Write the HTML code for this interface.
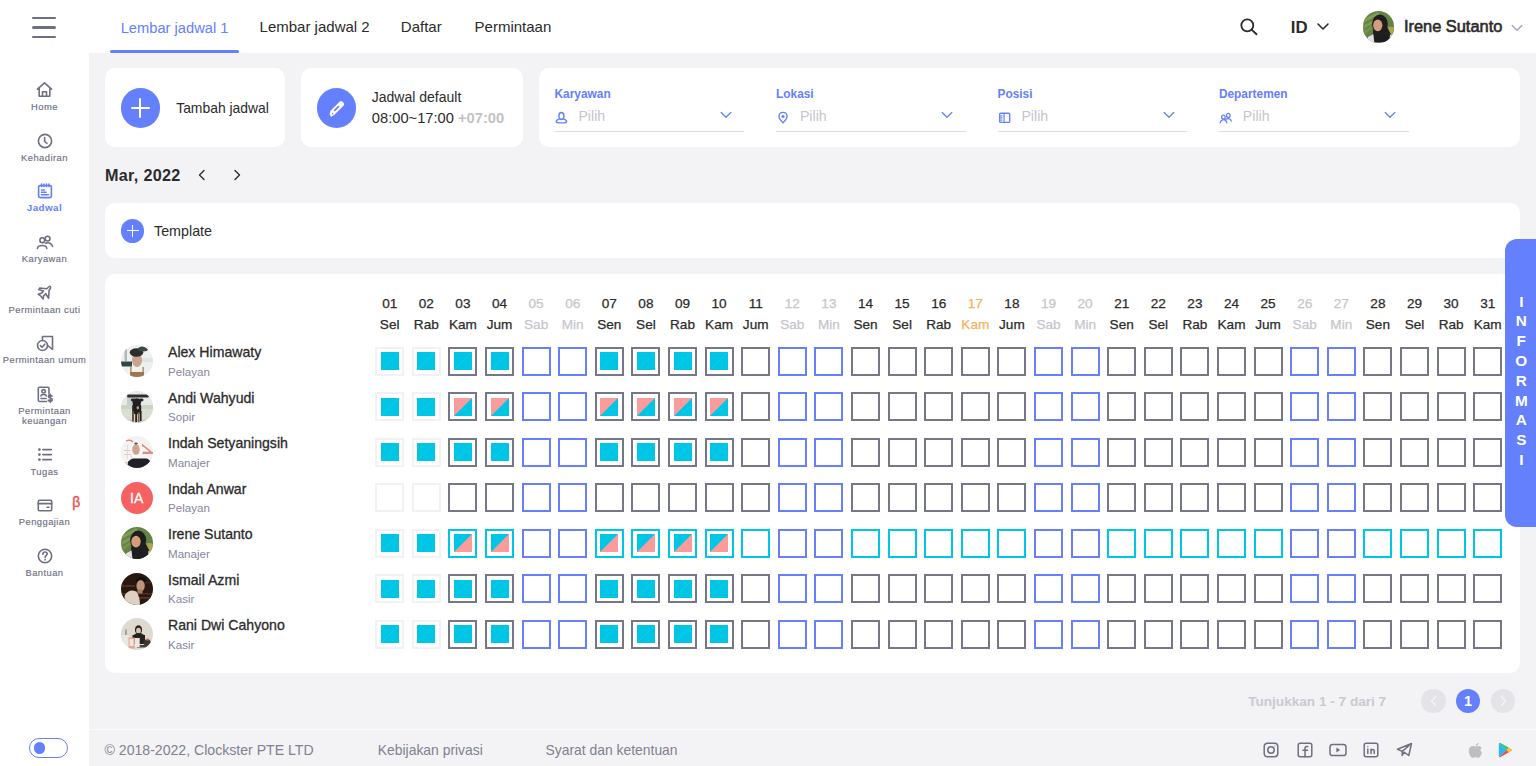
<!DOCTYPE html>
<html><head><meta charset="utf-8"><title>Jadwal</title>
<style>
html,body{margin:0;padding:0;}
body{width:1536px;height:766px;overflow:hidden;position:relative;background:#f3f3f6;font-family:"Liberation Sans",sans-serif;}
.t{position:absolute;white-space:nowrap;line-height:1;}
.circ{position:absolute;border-radius:50%;background:#6580fd;}
.av{position:absolute;border-radius:50%;overflow:hidden;font-family:"Liberation Sans",sans-serif;}
.c{position:absolute;width:29px;height:29px;box-sizing:border-box;}
.c i{position:absolute;left:3.5px;top:3.5px;right:3.5px;bottom:3.5px;display:block;}
svg{overflow:visible;}
</style></head><body>
<div style="position:absolute;left:0px;top:0px;width:89px;height:766px;background:#ffffff"></div>
<div style="position:absolute;left:89px;top:0px;width:1447px;height:52.5px;background:#ffffff"></div>
<div style="position:absolute;left:89px;top:729px;width:1447px;height:1px;background:#fbfbfc"></div>
<div style="position:absolute;left:32px;top:16.6px;width:24px;height:2.4px;background:#6e7082;border-radius:2px"></div>
<div style="position:absolute;left:32px;top:26.2px;width:24px;height:2.4px;background:#6e7082;border-radius:2px"></div>
<div style="position:absolute;left:32px;top:35.9px;width:24px;height:2.4px;background:#6e7082;border-radius:2px"></div>
<svg style="position:absolute;left:36px;top:81px" width="17" height="17" viewBox="0 0 17 17"><path d="M1.5 8.2 L8.5 1.8 L15.5 8.2 M3.2 6.8 V15.2 H13.8 V6.8 M6.5 15.2 V10.8 H10.5 V15.2" fill="none" stroke="#6e7082" stroke-width="1.6" stroke-linecap="round" stroke-linejoin="round"/></svg>
<div class="t" style="left:0.00px;width:89px;text-align:center;top:101.90px;font-size:9.4px;color:#6e7082;font-weight:400;letter-spacing:0.45px;-webkit-text-stroke:0.15px #6e7082;">Home</div>
<svg style="position:absolute;left:36.5px;top:132.5px" width="16" height="16" viewBox="0 0 16 16"><circle cx="8" cy="8" r="6.6" fill="none" stroke="#6e7082" stroke-width="1.6" stroke-linecap="round" stroke-linejoin="round"/><path d="M7.6 4.5 V8.3 L10 10.5" fill="none" stroke="#6e7082" stroke-width="1.6" stroke-linecap="round" stroke-linejoin="round"/></svg>
<div class="t" style="left:0.00px;width:89px;text-align:center;top:152.80px;font-size:9.4px;color:#6e7082;font-weight:400;letter-spacing:0.45px;-webkit-text-stroke:0.15px #6e7082;">Kehadiran</div>
<svg style="position:absolute;left:36.5px;top:183px" width="16" height="16" viewBox="0 0 16 16"><rect x="1.6" y="2.6" width="12.8" height="12" rx="1.5" fill="none" stroke="#6580fd" stroke-width="1.6" stroke-linecap="round" stroke-linejoin="round"/><path d="M4.5 1 V3.5 M7 1 V3.5 M9.5 1 V3.5 M12 1 V3.5 M4.5 7 H7.5 M4.5 9.3 H9 M4.5 11.8 H11.5" fill="none" stroke="#6580fd" stroke-width="1.6" stroke-linecap="round" stroke-linejoin="round"/></svg>
<div class="t" style="left:0.00px;width:89px;text-align:center;top:203.40px;font-size:9.8px;color:#6580fd;font-weight:700;letter-spacing:0.45px;">Jadwal</div>
<svg style="position:absolute;left:36px;top:234.5px" width="18" height="15" viewBox="0 0 18 15"><circle cx="6.3" cy="5.2" r="2.4" fill="none" stroke="#6e7082" stroke-width="1.6" stroke-linecap="round" stroke-linejoin="round"/><circle cx="11.6" cy="3.6" r="2.4" fill="none" stroke="#6e7082" stroke-width="1.6" stroke-linecap="round" stroke-linejoin="round"/><path d="M1.5 13.5 C1.8 9.5 10.5 9.5 10.8 13.5 M9.5 8.2 C12.5 7 16 8.3 16.5 11.5" fill="none" stroke="#6e7082" stroke-width="1.6" stroke-linecap="round" stroke-linejoin="round"/></svg>
<div class="t" style="left:0.00px;width:89px;text-align:center;top:253.90px;font-size:9.4px;color:#6e7082;font-weight:400;letter-spacing:0.45px;-webkit-text-stroke:0.15px #6e7082;">Karyawan</div>
<svg style="position:absolute;left:36.5px;top:284.5px" width="16" height="16" viewBox="0 0 16 16"><path d="M13.2 1.4 C14 2 13.6 3.6 12.1 5.3 L11.6 13.2 L8.7 8.7 L6.6 10.9 L6.2 14 L3.9 11.2 L1.2 9.2 L4.8 7.9 L6.5 6 L1.8 4.4 L2.8 3 L9.8 3.8 C11.2 2.2 12.6 1 13.2 1.4 Z" fill="none" stroke="#6e7082" stroke-width="1.6" stroke-linecap="round" stroke-linejoin="round" stroke-width="1.35"/></svg>
<div class="t" style="left:0.00px;width:89px;text-align:center;top:304.70px;font-size:9.4px;color:#6e7082;font-weight:400;letter-spacing:0.45px;-webkit-text-stroke:0.15px #6e7082;">Permintaan cuti</div>
<svg style="position:absolute;left:35.5px;top:334.5px" width="18" height="17" viewBox="0 0 18 17"><path d="M6.5 5.5 V1.5 H16.5 V14.5 L11.8 10.5" fill="none" stroke="#6e7082" stroke-width="1.6" stroke-linecap="round" stroke-linejoin="round"/><circle cx="6.5" cy="10.5" r="5" fill="none" stroke="#6e7082" stroke-width="1.6" stroke-linecap="round" stroke-linejoin="round"/><path d="M4.4 10.6 L6 12.2 L8.8 9.2" fill="none" stroke="#6e7082" stroke-width="1.6" stroke-linecap="round" stroke-linejoin="round"/></svg>
<div class="t" style="left:0.00px;width:89px;text-align:center;top:355.20px;font-size:9.4px;color:#6e7082;font-weight:400;letter-spacing:0.45px;-webkit-text-stroke:0.15px #6e7082;">Permintaan umum</div>
<svg style="position:absolute;left:37px;top:385.5px" width="17" height="17" viewBox="0 0 17 17"><path d="M12 8 V2.6 C12 1.9 11.4 1.3 10.7 1.3 H2.6 C1.9 1.3 1.3 1.9 1.3 2.6 V14.2 C1.3 14.9 1.9 15.5 2.6 15.5 H9.5" fill="none" stroke="#6e7082" stroke-width="1.6" stroke-linecap="round" stroke-linejoin="round"/><circle cx="6.6" cy="5.3" r="1.7" fill="none" stroke="#6e7082" stroke-width="1.6" stroke-linecap="round" stroke-linejoin="round"/><path d="M3.9 10 C4.2 8 9 8 9.3 10 M4 12.5 H9" fill="none" stroke="#6e7082" stroke-width="1.6" stroke-linecap="round" stroke-linejoin="round"/><path d="M15 10.2 C14.6 9.4 13.9 9.1 13.2 9.1 C12.2 9.1 11.4 9.7 11.4 10.5 C11.4 12.3 15.2 11.7 15.2 13.8 C15.2 14.7 14.3 15.3 13.2 15.3 C12.3 15.3 11.6 14.9 11.2 14.2 M13.2 8.2 V16.3" fill="none" stroke="#6e7082" stroke-width="1.6" stroke-linecap="round" stroke-linejoin="round" stroke-width="1.3"/></svg>
<div class="t" style="left:0.00px;width:89px;text-align:center;top:406.00px;font-size:9.4px;color:#6e7082;font-weight:400;letter-spacing:0.45px;-webkit-text-stroke:0.15px #6e7082;">Permintaan</div>
<div class="t" style="left:0.00px;width:89px;text-align:center;top:416.10px;font-size:9.4px;color:#6e7082;font-weight:400;letter-spacing:0.45px;-webkit-text-stroke:0.15px #6e7082;">keuangan</div>
<svg style="position:absolute;left:36.5px;top:446.5px" width="16" height="16" viewBox="0 0 16 16"><circle cx="2.4" cy="2.6" r="1.35" fill="#6e7082"/><circle cx="2.4" cy="7.6" r="1.35" fill="#6e7082"/><circle cx="2.4" cy="12.6" r="1.35" fill="#6e7082"/><path d="M5.8 2.6 H14.3 M5.8 7.6 H14.3 M5.8 12.6 H14.3" fill="none" stroke="#6e7082" stroke-width="1.6" stroke-linecap="round" stroke-linejoin="round"/></svg>
<div class="t" style="left:0.00px;width:89px;text-align:center;top:466.80px;font-size:9.4px;color:#6e7082;font-weight:400;letter-spacing:0.45px;-webkit-text-stroke:0.15px #6e7082;">Tugas</div>
<svg style="position:absolute;left:36.5px;top:498.5px" width="16" height="13" viewBox="0 0 16 13"><rect x="1.3" y="1.3" width="13.4" height="10.4" rx="1.3" fill="none" stroke="#6e7082" stroke-width="1.6" stroke-linecap="round" stroke-linejoin="round"/><path d="M1.3 4.6 H14.7" fill="none" stroke="#6e7082" stroke-width="1.6" stroke-linecap="round" stroke-linejoin="round"/><path d="M10 8.3 H12" fill="none" stroke="#6e7082" stroke-width="1.6" stroke-linecap="round" stroke-linejoin="round"/></svg>
<div class="t" style="left:72.30px;top:494.50px;font-size:14px;color:#f0504f;font-weight:400;-webkit-text-stroke:0.4px #f0504f;">β</div>
<div class="t" style="left:0.00px;width:89px;text-align:center;top:517.10px;font-size:9.4px;color:#6e7082;font-weight:400;letter-spacing:0.45px;-webkit-text-stroke:0.15px #6e7082;">Penggajian</div>
<svg style="position:absolute;left:36.5px;top:547.5px" width="16" height="16" viewBox="0 0 16 16"><circle cx="8" cy="8" r="6.7" fill="none" stroke="#6e7082" stroke-width="1.6" stroke-linecap="round" stroke-linejoin="round"/><path d="M5.9 6.2 C5.9 4.9 6.9 4 8 4 C9.2 4 10.2 4.9 10.2 6 C10.2 7.4 8.1 7.6 8.1 9.4" fill="none" stroke="#6e7082" stroke-width="1.6" stroke-linecap="round" stroke-linejoin="round"/><circle cx="8.1" cy="11.7" r="0.9" fill="#6e7082"/></svg>
<div class="t" style="left:0.00px;width:89px;text-align:center;top:568.30px;font-size:9.4px;color:#6e7082;font-weight:400;letter-spacing:0.45px;-webkit-text-stroke:0.15px #6e7082;">Bantuan</div>
<div style="position:absolute;left:28.8px;top:738.1px;width:39.4px;height:19.6px;box-sizing:border-box;border:1.6px solid #6580fd;border-radius:10px"></div>
<div style="position:absolute;left:33.8px;top:742.2px;width:11.6px;height:11.6px;background:#6580fd;border-radius:50%"></div>
<div class="t" style="left:120.70px;top:20.50px;font-size:14.7px;color:#6580fd;font-weight:400;">Lembar jadwal 1</div>
<div style="position:absolute;left:109.7px;top:49.6px;width:129.2px;height:3.4px;background:#6580fd;border-radius:2px"></div>
<div class="t" style="left:259.60px;top:18.90px;font-size:15.0px;color:#2b2b2b;font-weight:400;">Lembar jadwal 2</div>
<div class="t" style="left:400.80px;top:18.90px;font-size:15.0px;color:#2b2b2b;font-weight:400;">Daftar</div>
<div class="t" style="left:474.60px;top:18.90px;font-size:15.0px;color:#2b2b2b;font-weight:400;">Permintaan</div>
<svg style="position:absolute;left:1239.3px;top:17.1px" width="20" height="20" viewBox="0 0 20 20"><circle cx="8.3" cy="8.3" r="6" fill="none" stroke="#2b2b2b" stroke-width="1.8"/><path d="M12.6 12.6 L17.5 17.3" stroke="#2b2b2b" stroke-width="1.9" stroke-linecap="round"/></svg>
<div class="t" style="left:1290.80px;top:19.60px;font-size:16.8px;color:#2b2b2b;font-weight:700;">ID</div>
<svg style="position:absolute;left:1316px;top:21px" width="14" height="11" viewBox="0 0 14 11"><path d="M2 3 L7 8 L12 3" fill="none" stroke="#2b2b2b" stroke-width="1.6" stroke-linecap="round" stroke-linejoin="round"/></svg>
<div class="av" style="left:1362.5px;top:11px;width:31.5px;height:31.5px"><svg width="31.5" height="31.5" viewBox="0 0 32 32"><rect width="32" height="32" fill="#658345"/><path d="M0 9 L15 1 L17 3 L1 12 Z" fill="#7f9c58"/><path d="M0 15 L13 8 L14 10 L1 18 Z" fill="#7c9a56"/><path d="M0 21 L11 14 L12 16 L1 24 Z" fill="#74924f"/><ellipse cx="28.5" cy="21" rx="5.5" ry="5" fill="#a9a64c"/><ellipse cx="17.2" cy="13.2" rx="8" ry="9.6" fill="#1e1e20"/><path d="M9 32 L10.5 22.5 L28 22.5 L29.5 32 Z" fill="#1e1e20"/><path d="M10.5 17 L25 17 L28 23 L10 23 Z" fill="#1e1e20"/><path d="M5 26.5 L10.5 23.5 L11.5 32 L5 32 Z" fill="#e4e0e8"/><path d="M27.5 23.8 L31 25.5 L30 32 L26.5 32 Z" fill="#e4e0e8"/><ellipse cx="15" cy="14.6" rx="4.7" ry="5.9" fill="#d39d7e"/></svg></div>
<div class="t" style="left:1403.90px;top:18.30px;font-size:16.4px;color:#2b2b2b;font-weight:400;-webkit-text-stroke:0.6px #2b2b2b;">Irene Sutanto</div>
<svg style="position:absolute;left:1510px;top:22px" width="14" height="11" viewBox="0 0 14 11"><path d="M2.2 3.5 L7 8.2 L11.8 3.5" fill="none" stroke="#9da3c2" stroke-width="1.3" stroke-linecap="round" stroke-linejoin="round"/></svg>
<div style="position:absolute;left:104.9px;top:68.1px;width:180px;height:79.1px;background:#fff;border-radius:10px"></div>
<div class="circ" style="left:120.8px;top:88px;width:39.5px;height:39.5px"></div>
<div style="position:absolute;left:130.6px;top:106.7px;width:19.5px;height:2.2px;background:#fff;border-radius:1px"></div>
<div style="position:absolute;left:139.25px;top:98px;width:2.2px;height:19.5px;background:#fff;border-radius:1px"></div>
<div class="t" style="left:176.20px;top:102.20px;font-size:13.9px;color:#2b2b2b;font-weight:400;">Tambah jadwal</div>
<div style="position:absolute;left:301.2px;top:68.2px;width:221.5px;height:78.7px;background:#fff;border-radius:10px"></div>
<div class="circ" style="left:316.5px;top:88px;width:39.7px;height:39.7px"></div>
<svg style="position:absolute;left:326px;top:98px" width="20" height="20" viewBox="0 0 20 20"><g transform="translate(10.4,10.8) rotate(-45)"><path d="M-9.2 1.2 Q-9.4 2.6 -8 2.2 L-5.6 2.75 H7.2 Q9.3 2.75 9.3 0.8 V-0.8 Q9.3 -2.75 7.2 -2.75 H-5.6 L-8.6 -1 Z" fill="#fff"/><rect x="-3.2" y="-0.85" width="7" height="1.7" rx="0.85" fill="#6580fd"/><path d="M-7.6 0.9 L-5.6 -0.3 L-5.6 1.6 Z" fill="#6580fd"/></g></svg>
<div class="t" style="left:371.80px;top:90.40px;font-size:14.0px;color:#2b2b2b;font-weight:400;">Jadwal default</div>
<div class="t" style="left:371.80px;top:110.60px;font-size:14.7px;color:#2b2b2b;font-weight:400;">08:00~17:00 <span style="color:#c2c2c6;font-weight:700">+07:00</span></div>
<div style="position:absolute;left:539px;top:68.2px;width:981px;height:78.7px;background:#fff;border-radius:10px"></div>
<div class="t" style="left:554.50px;top:88.80px;font-size:11.9px;color:#6580fd;font-weight:700;">Karyawan</div>
<svg style="position:absolute;left:555px;top:110.6px" width="13" height="14" viewBox="0 0 13 14"><ellipse cx="6.4" cy="5" rx="2.5" ry="3.5" fill="none" stroke="#6580fd" stroke-width="1.4"/><path d="M4.2 8.1 C2 8.6 1.2 9.6 1.2 10.4 C1.2 11.5 3.5 11.9 6.4 11.9 C9.3 11.9 11.6 11.5 11.6 10.4 C11.6 9.6 10.8 8.6 8.6 8.1" fill="none" stroke="#6580fd" stroke-width="1.4" stroke-linecap="round"/></svg>
<div class="t" style="left:578.40px;top:108.80px;font-size:14.2px;color:#c6c6cc;font-weight:400;">Pilih</div>
<svg style="position:absolute;left:719.5px;top:110px" width="12" height="10" viewBox="0 0 12 10"><path d="M1.2 2.5 L6 7.2 L10.8 2.5" fill="none" stroke="#6580fd" stroke-width="1.3" stroke-linecap="round" stroke-linejoin="round"/></svg>
<div style="position:absolute;left:554.6px;top:130.6px;width:189.6px;height:1.5px;background:#dcdce2"></div>
<div class="t" style="left:776.00px;top:88.80px;font-size:11.9px;color:#6580fd;font-weight:700;">Lokasi</div>
<svg style="position:absolute;left:776.5px;top:110.6px" width="13" height="14" viewBox="0 0 13 14"><g transform="translate(0.9,0.3) scale(0.93)"><path d="M5.5 12.4 C3 9.8 1.2 7.8 1.2 5.5 C1.2 3 3.1 1.2 5.5 1.2 C7.9 1.2 9.8 3 9.8 5.5 C9.8 7.8 8 9.8 5.5 12.4 Z" fill="none" stroke="#6580fd" stroke-width="1.45"/><ellipse cx="5.5" cy="5.6" rx="1.5" ry="1.1" fill="#6580fd" stroke="#6580fd" stroke-width="0.8"/></g></svg>
<div class="t" style="left:799.90px;top:108.80px;font-size:14.2px;color:#c6c6cc;font-weight:400;">Pilih</div>
<svg style="position:absolute;left:941.0px;top:110px" width="12" height="10" viewBox="0 0 12 10"><path d="M1.2 2.5 L6 7.2 L10.8 2.5" fill="none" stroke="#6580fd" stroke-width="1.3" stroke-linecap="round" stroke-linejoin="round"/></svg>
<div style="position:absolute;left:776.1px;top:130.6px;width:189.6px;height:1.5px;background:#dcdce2"></div>
<div class="t" style="left:997.50px;top:88.80px;font-size:11.9px;color:#6580fd;font-weight:700;">Posisi</div>
<svg style="position:absolute;left:998px;top:110.6px" width="13" height="14" viewBox="0 0 13 14"><rect x="1.7" y="2.3" width="10" height="9.1" rx="1" fill="none" stroke="#6580fd" stroke-width="1.4"/><path d="M6.1 2.3 V11.4 M2.4 4.9 H4.4 M2.4 6.9 H4.4 M2.4 9.1 H4.4" fill="none" stroke="#6580fd" stroke-width="1.2"/></svg>
<div class="t" style="left:1021.40px;top:108.80px;font-size:14.2px;color:#c6c6cc;font-weight:400;">Pilih</div>
<svg style="position:absolute;left:1162.5px;top:110px" width="12" height="10" viewBox="0 0 12 10"><path d="M1.2 2.5 L6 7.2 L10.8 2.5" fill="none" stroke="#6580fd" stroke-width="1.3" stroke-linecap="round" stroke-linejoin="round"/></svg>
<div style="position:absolute;left:997.6px;top:130.6px;width:189.6px;height:1.5px;background:#dcdce2"></div>
<div class="t" style="left:1218.90px;top:88.80px;font-size:11.9px;color:#6580fd;font-weight:700;">Departemen</div>
<svg style="position:absolute;left:1219.4px;top:110.6px" width="13" height="14" viewBox="0 0 13 14"><ellipse cx="4.4" cy="6.1" rx="1.75" ry="1.95" fill="none" stroke="#6580fd" stroke-width="1.25"/><ellipse cx="9.3" cy="4.4" rx="1.75" ry="1.95" fill="none" stroke="#6580fd" stroke-width="1.25"/><path d="M1.1 11.8 C1.8 9.6 3.2 8.6 4.6 8.6 C6 8.6 7.4 9.6 7.9 11.8 M6.6 8.1 C7.6 7.6 8.5 7.5 9.3 7.5 C10.8 7.5 11.9 8.6 12.3 10.2" fill="none" stroke="#6580fd" stroke-width="1.25" stroke-linecap="round"/></svg>
<div class="t" style="left:1242.80px;top:108.80px;font-size:14.2px;color:#c6c6cc;font-weight:400;">Pilih</div>
<svg style="position:absolute;left:1383.9px;top:110px" width="12" height="10" viewBox="0 0 12 10"><path d="M1.2 2.5 L6 7.2 L10.8 2.5" fill="none" stroke="#6580fd" stroke-width="1.3" stroke-linecap="round" stroke-linejoin="round"/></svg>
<div style="position:absolute;left:1219.0px;top:130.6px;width:189.6px;height:1.5px;background:#dcdce2"></div>
<div class="t" style="left:105.00px;top:167.00px;font-size:16.2px;color:#2b2b2b;font-weight:700;letter-spacing:0.3px;">Mar, 2022</div>
<svg style="position:absolute;left:196px;top:168px" width="12" height="14" viewBox="0 0 12 14"><path d="M8 2.5 L3.5 7 L8 11.5" fill="none" stroke="#2b2b2b" stroke-width="1.4" stroke-linecap="round" stroke-linejoin="round"/></svg>
<svg style="position:absolute;left:231px;top:168px" width="12" height="14" viewBox="0 0 12 14"><path d="M4 2.5 L8.5 7 L4 11.5" fill="none" stroke="#2b2b2b" stroke-width="1.4" stroke-linecap="round" stroke-linejoin="round"/></svg>
<div style="position:absolute;left:105px;top:202.8px;width:1415px;height:55.2px;background:#fff;border-radius:10px"></div>
<div class="circ" style="left:120.8px;top:219px;width:23.6px;height:23.6px"></div>
<div style="position:absolute;left:126.6px;top:229.9px;width:12px;height:1.6px;background:#fff"></div>
<div style="position:absolute;left:131.8px;top:224.8px;width:1.6px;height:12px;background:#fff"></div>
<div class="t" style="left:154.00px;top:223.90px;font-size:14.3px;color:#2b2b2b;font-weight:400;">Template</div>
<div style="position:absolute;left:105px;top:274px;width:1415px;height:399px;background:#fff;border-radius:10px"></div>
<div class="t" style="left:371.70px;width:36px;text-align:center;top:296.90px;font-size:13.6px;color:#2b2b2b;font-weight:400;-webkit-text-stroke:0.25px #2b2b2b;">01</div>
<div class="t" style="left:371.70px;width:36px;text-align:center;top:317.70px;font-size:13.6px;color:#2b2b2b;font-weight:400;-webkit-text-stroke:0.25px #2b2b2b;">Sel</div>
<div class="t" style="left:408.30px;width:36px;text-align:center;top:296.90px;font-size:13.6px;color:#2b2b2b;font-weight:400;-webkit-text-stroke:0.25px #2b2b2b;">02</div>
<div class="t" style="left:408.30px;width:36px;text-align:center;top:317.70px;font-size:13.6px;color:#2b2b2b;font-weight:400;-webkit-text-stroke:0.25px #2b2b2b;">Rab</div>
<div class="t" style="left:444.90px;width:36px;text-align:center;top:296.90px;font-size:13.6px;color:#2b2b2b;font-weight:400;-webkit-text-stroke:0.25px #2b2b2b;">03</div>
<div class="t" style="left:444.90px;width:36px;text-align:center;top:317.70px;font-size:13.6px;color:#2b2b2b;font-weight:400;-webkit-text-stroke:0.25px #2b2b2b;">Kam</div>
<div class="t" style="left:481.50px;width:36px;text-align:center;top:296.90px;font-size:13.6px;color:#2b2b2b;font-weight:400;-webkit-text-stroke:0.25px #2b2b2b;">04</div>
<div class="t" style="left:481.50px;width:36px;text-align:center;top:317.70px;font-size:13.6px;color:#2b2b2b;font-weight:400;-webkit-text-stroke:0.25px #2b2b2b;">Jum</div>
<div class="t" style="left:518.10px;width:36px;text-align:center;top:296.90px;font-size:13.6px;color:#c6c6cc;font-weight:400;-webkit-text-stroke:0.25px #c6c6cc;">05</div>
<div class="t" style="left:518.10px;width:36px;text-align:center;top:317.70px;font-size:13.6px;color:#c6c6cc;font-weight:400;-webkit-text-stroke:0.25px #c6c6cc;">Sab</div>
<div class="t" style="left:554.70px;width:36px;text-align:center;top:296.90px;font-size:13.6px;color:#c6c6cc;font-weight:400;-webkit-text-stroke:0.25px #c6c6cc;">06</div>
<div class="t" style="left:554.70px;width:36px;text-align:center;top:317.70px;font-size:13.6px;color:#c6c6cc;font-weight:400;-webkit-text-stroke:0.25px #c6c6cc;">Min</div>
<div class="t" style="left:591.30px;width:36px;text-align:center;top:296.90px;font-size:13.6px;color:#2b2b2b;font-weight:400;-webkit-text-stroke:0.25px #2b2b2b;">07</div>
<div class="t" style="left:591.30px;width:36px;text-align:center;top:317.70px;font-size:13.6px;color:#2b2b2b;font-weight:400;-webkit-text-stroke:0.25px #2b2b2b;">Sen</div>
<div class="t" style="left:627.90px;width:36px;text-align:center;top:296.90px;font-size:13.6px;color:#2b2b2b;font-weight:400;-webkit-text-stroke:0.25px #2b2b2b;">08</div>
<div class="t" style="left:627.90px;width:36px;text-align:center;top:317.70px;font-size:13.6px;color:#2b2b2b;font-weight:400;-webkit-text-stroke:0.25px #2b2b2b;">Sel</div>
<div class="t" style="left:664.50px;width:36px;text-align:center;top:296.90px;font-size:13.6px;color:#2b2b2b;font-weight:400;-webkit-text-stroke:0.25px #2b2b2b;">09</div>
<div class="t" style="left:664.50px;width:36px;text-align:center;top:317.70px;font-size:13.6px;color:#2b2b2b;font-weight:400;-webkit-text-stroke:0.25px #2b2b2b;">Rab</div>
<div class="t" style="left:701.10px;width:36px;text-align:center;top:296.90px;font-size:13.6px;color:#2b2b2b;font-weight:400;-webkit-text-stroke:0.25px #2b2b2b;">10</div>
<div class="t" style="left:701.10px;width:36px;text-align:center;top:317.70px;font-size:13.6px;color:#2b2b2b;font-weight:400;-webkit-text-stroke:0.25px #2b2b2b;">Kam</div>
<div class="t" style="left:737.70px;width:36px;text-align:center;top:296.90px;font-size:13.6px;color:#2b2b2b;font-weight:400;-webkit-text-stroke:0.25px #2b2b2b;">11</div>
<div class="t" style="left:737.70px;width:36px;text-align:center;top:317.70px;font-size:13.6px;color:#2b2b2b;font-weight:400;-webkit-text-stroke:0.25px #2b2b2b;">Jum</div>
<div class="t" style="left:774.30px;width:36px;text-align:center;top:296.90px;font-size:13.6px;color:#c6c6cc;font-weight:400;-webkit-text-stroke:0.25px #c6c6cc;">12</div>
<div class="t" style="left:774.30px;width:36px;text-align:center;top:317.70px;font-size:13.6px;color:#c6c6cc;font-weight:400;-webkit-text-stroke:0.25px #c6c6cc;">Sab</div>
<div class="t" style="left:810.90px;width:36px;text-align:center;top:296.90px;font-size:13.6px;color:#c6c6cc;font-weight:400;-webkit-text-stroke:0.25px #c6c6cc;">13</div>
<div class="t" style="left:810.90px;width:36px;text-align:center;top:317.70px;font-size:13.6px;color:#c6c6cc;font-weight:400;-webkit-text-stroke:0.25px #c6c6cc;">Min</div>
<div class="t" style="left:847.50px;width:36px;text-align:center;top:296.90px;font-size:13.6px;color:#2b2b2b;font-weight:400;-webkit-text-stroke:0.25px #2b2b2b;">14</div>
<div class="t" style="left:847.50px;width:36px;text-align:center;top:317.70px;font-size:13.6px;color:#2b2b2b;font-weight:400;-webkit-text-stroke:0.25px #2b2b2b;">Sen</div>
<div class="t" style="left:884.10px;width:36px;text-align:center;top:296.90px;font-size:13.6px;color:#2b2b2b;font-weight:400;-webkit-text-stroke:0.25px #2b2b2b;">15</div>
<div class="t" style="left:884.10px;width:36px;text-align:center;top:317.70px;font-size:13.6px;color:#2b2b2b;font-weight:400;-webkit-text-stroke:0.25px #2b2b2b;">Sel</div>
<div class="t" style="left:920.70px;width:36px;text-align:center;top:296.90px;font-size:13.6px;color:#2b2b2b;font-weight:400;-webkit-text-stroke:0.25px #2b2b2b;">16</div>
<div class="t" style="left:920.70px;width:36px;text-align:center;top:317.70px;font-size:13.6px;color:#2b2b2b;font-weight:400;-webkit-text-stroke:0.25px #2b2b2b;">Rab</div>
<div class="t" style="left:957.30px;width:36px;text-align:center;top:296.90px;font-size:13.6px;color:#f7b35b;font-weight:400;-webkit-text-stroke:0.25px #f7b35b;">17</div>
<div class="t" style="left:957.30px;width:36px;text-align:center;top:317.70px;font-size:13.6px;color:#f7b35b;font-weight:400;-webkit-text-stroke:0.25px #f7b35b;">Kam</div>
<div class="t" style="left:993.90px;width:36px;text-align:center;top:296.90px;font-size:13.6px;color:#2b2b2b;font-weight:400;-webkit-text-stroke:0.25px #2b2b2b;">18</div>
<div class="t" style="left:993.90px;width:36px;text-align:center;top:317.70px;font-size:13.6px;color:#2b2b2b;font-weight:400;-webkit-text-stroke:0.25px #2b2b2b;">Jum</div>
<div class="t" style="left:1030.50px;width:36px;text-align:center;top:296.90px;font-size:13.6px;color:#c6c6cc;font-weight:400;-webkit-text-stroke:0.25px #c6c6cc;">19</div>
<div class="t" style="left:1030.50px;width:36px;text-align:center;top:317.70px;font-size:13.6px;color:#c6c6cc;font-weight:400;-webkit-text-stroke:0.25px #c6c6cc;">Sab</div>
<div class="t" style="left:1067.10px;width:36px;text-align:center;top:296.90px;font-size:13.6px;color:#c6c6cc;font-weight:400;-webkit-text-stroke:0.25px #c6c6cc;">20</div>
<div class="t" style="left:1067.10px;width:36px;text-align:center;top:317.70px;font-size:13.6px;color:#c6c6cc;font-weight:400;-webkit-text-stroke:0.25px #c6c6cc;">Min</div>
<div class="t" style="left:1103.70px;width:36px;text-align:center;top:296.90px;font-size:13.6px;color:#2b2b2b;font-weight:400;-webkit-text-stroke:0.25px #2b2b2b;">21</div>
<div class="t" style="left:1103.70px;width:36px;text-align:center;top:317.70px;font-size:13.6px;color:#2b2b2b;font-weight:400;-webkit-text-stroke:0.25px #2b2b2b;">Sen</div>
<div class="t" style="left:1140.30px;width:36px;text-align:center;top:296.90px;font-size:13.6px;color:#2b2b2b;font-weight:400;-webkit-text-stroke:0.25px #2b2b2b;">22</div>
<div class="t" style="left:1140.30px;width:36px;text-align:center;top:317.70px;font-size:13.6px;color:#2b2b2b;font-weight:400;-webkit-text-stroke:0.25px #2b2b2b;">Sel</div>
<div class="t" style="left:1176.90px;width:36px;text-align:center;top:296.90px;font-size:13.6px;color:#2b2b2b;font-weight:400;-webkit-text-stroke:0.25px #2b2b2b;">23</div>
<div class="t" style="left:1176.90px;width:36px;text-align:center;top:317.70px;font-size:13.6px;color:#2b2b2b;font-weight:400;-webkit-text-stroke:0.25px #2b2b2b;">Rab</div>
<div class="t" style="left:1213.50px;width:36px;text-align:center;top:296.90px;font-size:13.6px;color:#2b2b2b;font-weight:400;-webkit-text-stroke:0.25px #2b2b2b;">24</div>
<div class="t" style="left:1213.50px;width:36px;text-align:center;top:317.70px;font-size:13.6px;color:#2b2b2b;font-weight:400;-webkit-text-stroke:0.25px #2b2b2b;">Kam</div>
<div class="t" style="left:1250.10px;width:36px;text-align:center;top:296.90px;font-size:13.6px;color:#2b2b2b;font-weight:400;-webkit-text-stroke:0.25px #2b2b2b;">25</div>
<div class="t" style="left:1250.10px;width:36px;text-align:center;top:317.70px;font-size:13.6px;color:#2b2b2b;font-weight:400;-webkit-text-stroke:0.25px #2b2b2b;">Jum</div>
<div class="t" style="left:1286.70px;width:36px;text-align:center;top:296.90px;font-size:13.6px;color:#c6c6cc;font-weight:400;-webkit-text-stroke:0.25px #c6c6cc;">26</div>
<div class="t" style="left:1286.70px;width:36px;text-align:center;top:317.70px;font-size:13.6px;color:#c6c6cc;font-weight:400;-webkit-text-stroke:0.25px #c6c6cc;">Sab</div>
<div class="t" style="left:1323.30px;width:36px;text-align:center;top:296.90px;font-size:13.6px;color:#c6c6cc;font-weight:400;-webkit-text-stroke:0.25px #c6c6cc;">27</div>
<div class="t" style="left:1323.30px;width:36px;text-align:center;top:317.70px;font-size:13.6px;color:#c6c6cc;font-weight:400;-webkit-text-stroke:0.25px #c6c6cc;">Min</div>
<div class="t" style="left:1359.90px;width:36px;text-align:center;top:296.90px;font-size:13.6px;color:#2b2b2b;font-weight:400;-webkit-text-stroke:0.25px #2b2b2b;">28</div>
<div class="t" style="left:1359.90px;width:36px;text-align:center;top:317.70px;font-size:13.6px;color:#2b2b2b;font-weight:400;-webkit-text-stroke:0.25px #2b2b2b;">Sen</div>
<div class="t" style="left:1396.50px;width:36px;text-align:center;top:296.90px;font-size:13.6px;color:#2b2b2b;font-weight:400;-webkit-text-stroke:0.25px #2b2b2b;">29</div>
<div class="t" style="left:1396.50px;width:36px;text-align:center;top:317.70px;font-size:13.6px;color:#2b2b2b;font-weight:400;-webkit-text-stroke:0.25px #2b2b2b;">Sel</div>
<div class="t" style="left:1433.10px;width:36px;text-align:center;top:296.90px;font-size:13.6px;color:#2b2b2b;font-weight:400;-webkit-text-stroke:0.25px #2b2b2b;">30</div>
<div class="t" style="left:1433.10px;width:36px;text-align:center;top:317.70px;font-size:13.6px;color:#2b2b2b;font-weight:400;-webkit-text-stroke:0.25px #2b2b2b;">Rab</div>
<div class="t" style="left:1469.70px;width:36px;text-align:center;top:296.90px;font-size:13.6px;color:#2b2b2b;font-weight:400;-webkit-text-stroke:0.25px #2b2b2b;">31</div>
<div class="t" style="left:1469.70px;width:36px;text-align:center;top:317.70px;font-size:13.6px;color:#2b2b2b;font-weight:400;-webkit-text-stroke:0.25px #2b2b2b;">Kam</div>
<div class="av" style="left:120.8px;top:345.10px;width:32px;height:32px"><svg width="32" height="32" viewBox="0 0 32 32"><rect width="32" height="32" fill="#eef0ee"/><rect x="0" y="16.5" width="11" height="5" fill="#2e4846"/><rect x="3.5" y="4" width="2.5" height="13" fill="#8a9498" opacity="0.6"/><rect x="21" y="13" width="11" height="4" fill="#dfe4e2"/><ellipse cx="16" cy="15" rx="5" ry="7" fill="#c9a38d"/><ellipse cx="15.5" cy="7.5" rx="6.8" ry="4.2" fill="#2d2d2d"/><ellipse cx="22" cy="4" rx="5" ry="2.5" fill="#3b4a44"/><ellipse cx="16" cy="31" rx="15" ry="9" fill="#f3f0ea"/><rect x="9" y="27" width="14" height="5" fill="#a07650"/><rect x="9.3" y="22" width="1.2" height="5.5" fill="#a07650"/><rect x="21.5" y="22" width="1.2" height="5.5" fill="#a07650"/></svg></div>
<div class="t" style="left:168.00px;top:345.00px;font-size:14.1px;color:#2b2b2b;font-weight:400;-webkit-text-stroke:0.3px #2b2b2b;">Alex Himawaty</div>
<div class="t" style="left:168.00px;top:365.80px;font-size:11.6px;color:#85869e;font-weight:400;">Pelayan</div>
<div class="c" style="left:375.20px;top:346.60px;border:2px solid #f2f2f5"><svg style="position:absolute;left:3.5px;top:3.5px" width="18" height="18"><rect width="18" height="18" fill="#00c6e6"/><path d="M0.3 17.7 L17.7 0.3" stroke="#22cdea" stroke-width="0.6"/></svg></div>
<div class="c" style="left:411.80px;top:346.60px;border:2px solid #f2f2f5"><svg style="position:absolute;left:3.5px;top:3.5px" width="18" height="18"><rect width="18" height="18" fill="#00c6e6"/><path d="M0.3 17.7 L17.7 0.3" stroke="#22cdea" stroke-width="0.6"/></svg></div>
<div class="c" style="left:448.40px;top:346.60px;border:2px solid #757688"><svg style="position:absolute;left:3.5px;top:3.5px" width="18" height="18"><rect width="18" height="18" fill="#00c6e6"/><path d="M0.3 17.7 L17.7 0.3" stroke="#22cdea" stroke-width="0.6"/></svg></div>
<div class="c" style="left:485.00px;top:346.60px;border:2px solid #757688"><svg style="position:absolute;left:3.5px;top:3.5px" width="18" height="18"><rect width="18" height="18" fill="#00c6e6"/><path d="M0.3 17.7 L17.7 0.3" stroke="#22cdea" stroke-width="0.6"/></svg></div>
<div class="c" style="left:521.60px;top:346.60px;border:2px solid #687ffb"></div>
<div class="c" style="left:558.20px;top:346.60px;border:2px solid #687ffb"></div>
<div class="c" style="left:594.80px;top:346.60px;border:2px solid #757688"><svg style="position:absolute;left:3.5px;top:3.5px" width="18" height="18"><rect width="18" height="18" fill="#00c6e6"/><path d="M0.3 17.7 L17.7 0.3" stroke="#22cdea" stroke-width="0.6"/></svg></div>
<div class="c" style="left:631.40px;top:346.60px;border:2px solid #757688"><svg style="position:absolute;left:3.5px;top:3.5px" width="18" height="18"><rect width="18" height="18" fill="#00c6e6"/><path d="M0.3 17.7 L17.7 0.3" stroke="#22cdea" stroke-width="0.6"/></svg></div>
<div class="c" style="left:668.00px;top:346.60px;border:2px solid #757688"><svg style="position:absolute;left:3.5px;top:3.5px" width="18" height="18"><rect width="18" height="18" fill="#00c6e6"/><path d="M0.3 17.7 L17.7 0.3" stroke="#22cdea" stroke-width="0.6"/></svg></div>
<div class="c" style="left:704.60px;top:346.60px;border:2px solid #757688"><svg style="position:absolute;left:3.5px;top:3.5px" width="18" height="18"><rect width="18" height="18" fill="#00c6e6"/><path d="M0.3 17.7 L17.7 0.3" stroke="#22cdea" stroke-width="0.6"/></svg></div>
<div class="c" style="left:741.20px;top:346.60px;border:2px solid #757688"></div>
<div class="c" style="left:777.80px;top:346.60px;border:2px solid #687ffb"></div>
<div class="c" style="left:814.40px;top:346.60px;border:2px solid #687ffb"></div>
<div class="c" style="left:851.00px;top:346.60px;border:2px solid #757688"></div>
<div class="c" style="left:887.60px;top:346.60px;border:2px solid #757688"></div>
<div class="c" style="left:924.20px;top:346.60px;border:2px solid #757688"></div>
<div class="c" style="left:960.80px;top:346.60px;border:2px solid #757688"></div>
<div class="c" style="left:997.40px;top:346.60px;border:2px solid #757688"></div>
<div class="c" style="left:1034.00px;top:346.60px;border:2px solid #687ffb"></div>
<div class="c" style="left:1070.60px;top:346.60px;border:2px solid #687ffb"></div>
<div class="c" style="left:1107.20px;top:346.60px;border:2px solid #757688"></div>
<div class="c" style="left:1143.80px;top:346.60px;border:2px solid #757688"></div>
<div class="c" style="left:1180.40px;top:346.60px;border:2px solid #757688"></div>
<div class="c" style="left:1217.00px;top:346.60px;border:2px solid #757688"></div>
<div class="c" style="left:1253.60px;top:346.60px;border:2px solid #757688"></div>
<div class="c" style="left:1290.20px;top:346.60px;border:2px solid #687ffb"></div>
<div class="c" style="left:1326.80px;top:346.60px;border:2px solid #687ffb"></div>
<div class="c" style="left:1363.40px;top:346.60px;border:2px solid #757688"></div>
<div class="c" style="left:1400.00px;top:346.60px;border:2px solid #757688"></div>
<div class="c" style="left:1436.60px;top:346.60px;border:2px solid #757688"></div>
<div class="c" style="left:1473.20px;top:346.60px;border:2px solid #757688"></div>
<div class="av" style="left:120.8px;top:390.60px;width:32px;height:32px"><svg width="32" height="32" viewBox="0 0 32 32"><rect width="32" height="32" fill="#e8eae7"/><rect x="0" y="14" width="32" height="18" fill="#ccd3c2"/><rect x="0" y="18" width="32" height="10" fill="#dde1d6" opacity="0.8"/><rect x="6" y="6" width="8" height="8" fill="#c9cdcb"/><rect x="6" y="3.5" width="22" height="3" rx="1.5" fill="#2c2e2d"/><ellipse cx="15.8" cy="11" rx="4.3" ry="3.8" fill="#202020"/><ellipse cx="11.8" cy="9" rx="2" ry="1.4" fill="#252525"/><ellipse cx="20.3" cy="9" rx="2.3" ry="1.4" fill="#252525"/><rect x="11.2" y="12.5" width="9" height="10.5" rx="3" fill="#1f1f1f"/><rect x="11" y="20" width="2" height="10.5" fill="#6b5235"/><rect x="14.2" y="21" width="1.8" height="10" fill="#222"/><rect x="16.8" y="21" width="1.8" height="10" fill="#7a5c3a"/><rect x="19" y="20" width="1.6" height="10" fill="#222"/><ellipse cx="16.8" cy="16.8" rx="1.2" ry="1.7" fill="#e08a98"/></svg></div>
<div class="t" style="left:168.00px;top:390.50px;font-size:14.1px;color:#2b2b2b;font-weight:400;-webkit-text-stroke:0.3px #2b2b2b;">Andi Wahyudi</div>
<div class="t" style="left:168.00px;top:411.30px;font-size:11.6px;color:#85869e;font-weight:400;">Sopir</div>
<div class="c" style="left:375.20px;top:392.10px;border:2px solid #f2f2f5"><svg style="position:absolute;left:3.5px;top:3.5px" width="18" height="18"><rect width="18" height="18" fill="#00c6e6"/><path d="M0.3 17.7 L17.7 0.3" stroke="#22cdea" stroke-width="0.6"/></svg></div>
<div class="c" style="left:411.80px;top:392.10px;border:2px solid #f2f2f5"><svg style="position:absolute;left:3.5px;top:3.5px" width="18" height="18"><rect width="18" height="18" fill="#00c6e6"/><path d="M0.3 17.7 L17.7 0.3" stroke="#22cdea" stroke-width="0.6"/></svg></div>
<div class="c" style="left:448.40px;top:392.10px;border:2px solid #757688"><svg style="position:absolute;left:3.5px;top:3.5px" width="18" height="18"><rect width="18" height="18" fill="#00c6e6"/><path d="M0 0 H18 L0 18 Z" fill="#fb9b9b"/></svg></div>
<div class="c" style="left:485.00px;top:392.10px;border:2px solid #757688"><svg style="position:absolute;left:3.5px;top:3.5px" width="18" height="18"><rect width="18" height="18" fill="#00c6e6"/><path d="M0 0 H18 L0 18 Z" fill="#fb9b9b"/></svg></div>
<div class="c" style="left:521.60px;top:392.10px;border:2px solid #687ffb"></div>
<div class="c" style="left:558.20px;top:392.10px;border:2px solid #687ffb"></div>
<div class="c" style="left:594.80px;top:392.10px;border:2px solid #757688"><svg style="position:absolute;left:3.5px;top:3.5px" width="18" height="18"><rect width="18" height="18" fill="#00c6e6"/><path d="M0 0 H18 L0 18 Z" fill="#fb9b9b"/></svg></div>
<div class="c" style="left:631.40px;top:392.10px;border:2px solid #757688"><svg style="position:absolute;left:3.5px;top:3.5px" width="18" height="18"><rect width="18" height="18" fill="#00c6e6"/><path d="M0 0 H18 L0 18 Z" fill="#fb9b9b"/></svg></div>
<div class="c" style="left:668.00px;top:392.10px;border:2px solid #757688"><svg style="position:absolute;left:3.5px;top:3.5px" width="18" height="18"><rect width="18" height="18" fill="#00c6e6"/><path d="M0 0 H18 L0 18 Z" fill="#fb9b9b"/></svg></div>
<div class="c" style="left:704.60px;top:392.10px;border:2px solid #757688"><svg style="position:absolute;left:3.5px;top:3.5px" width="18" height="18"><rect width="18" height="18" fill="#00c6e6"/><path d="M0 0 H18 L0 18 Z" fill="#fb9b9b"/></svg></div>
<div class="c" style="left:741.20px;top:392.10px;border:2px solid #757688"></div>
<div class="c" style="left:777.80px;top:392.10px;border:2px solid #687ffb"></div>
<div class="c" style="left:814.40px;top:392.10px;border:2px solid #687ffb"></div>
<div class="c" style="left:851.00px;top:392.10px;border:2px solid #757688"></div>
<div class="c" style="left:887.60px;top:392.10px;border:2px solid #757688"></div>
<div class="c" style="left:924.20px;top:392.10px;border:2px solid #757688"></div>
<div class="c" style="left:960.80px;top:392.10px;border:2px solid #757688"></div>
<div class="c" style="left:997.40px;top:392.10px;border:2px solid #757688"></div>
<div class="c" style="left:1034.00px;top:392.10px;border:2px solid #687ffb"></div>
<div class="c" style="left:1070.60px;top:392.10px;border:2px solid #687ffb"></div>
<div class="c" style="left:1107.20px;top:392.10px;border:2px solid #757688"></div>
<div class="c" style="left:1143.80px;top:392.10px;border:2px solid #757688"></div>
<div class="c" style="left:1180.40px;top:392.10px;border:2px solid #757688"></div>
<div class="c" style="left:1217.00px;top:392.10px;border:2px solid #757688"></div>
<div class="c" style="left:1253.60px;top:392.10px;border:2px solid #757688"></div>
<div class="c" style="left:1290.20px;top:392.10px;border:2px solid #687ffb"></div>
<div class="c" style="left:1326.80px;top:392.10px;border:2px solid #687ffb"></div>
<div class="c" style="left:1363.40px;top:392.10px;border:2px solid #757688"></div>
<div class="c" style="left:1400.00px;top:392.10px;border:2px solid #757688"></div>
<div class="c" style="left:1436.60px;top:392.10px;border:2px solid #757688"></div>
<div class="c" style="left:1473.20px;top:392.10px;border:2px solid #757688"></div>
<div class="av" style="left:120.8px;top:436.10px;width:32px;height:32px"><svg width="32" height="32" viewBox="0 0 32 32"><rect width="32" height="32" fill="#f4f2f2"/><path d="M21.5 9 L30.5 16.5 L20.5 16.5 Z" fill="none" stroke="#e57a6a" stroke-width="1.4"/><rect x="20" y="16" width="12" height="2" fill="#d89088"/><path d="M5 5 Q9 3 12 6" stroke="#e07a6a" stroke-width="1.3" fill="none"/><rect x="3" y="14" width="9" height="0.8" fill="#ebb8b0"/><rect x="3" y="18" width="9" height="0.8" fill="#ebb8b0"/><rect x="6" y="9" width="0.8" height="14" fill="#ddd6d6"/><rect x="10" y="9" width="0.8" height="14" fill="#ddd6d6"/><ellipse cx="15.5" cy="14" rx="6.5" ry="9" fill="#f8f8f8"/><ellipse cx="15" cy="13.5" rx="3.8" ry="5.2" fill="#d2a48e"/><ellipse cx="15" cy="7.6" rx="1.8" ry="1.1" fill="#555"/><path d="M4 32 Q6 24 12 22.5 L26 22.5 Q31 25 31 32 Z" fill="#1f2126"/><rect x="2" y="26" width="5" height="6" fill="#d9cbb0"/></svg></div>
<div class="t" style="left:168.00px;top:436.00px;font-size:14.1px;color:#2b2b2b;font-weight:400;-webkit-text-stroke:0.3px #2b2b2b;">Indah Setyaningsih</div>
<div class="t" style="left:168.00px;top:456.80px;font-size:11.6px;color:#85869e;font-weight:400;">Manajer</div>
<div class="c" style="left:375.20px;top:437.60px;border:2px solid #f2f2f5"><svg style="position:absolute;left:3.5px;top:3.5px" width="18" height="18"><rect width="18" height="18" fill="#00c6e6"/><path d="M0.3 17.7 L17.7 0.3" stroke="#22cdea" stroke-width="0.6"/></svg></div>
<div class="c" style="left:411.80px;top:437.60px;border:2px solid #f2f2f5"><svg style="position:absolute;left:3.5px;top:3.5px" width="18" height="18"><rect width="18" height="18" fill="#00c6e6"/><path d="M0.3 17.7 L17.7 0.3" stroke="#22cdea" stroke-width="0.6"/></svg></div>
<div class="c" style="left:448.40px;top:437.60px;border:2px solid #757688"><svg style="position:absolute;left:3.5px;top:3.5px" width="18" height="18"><rect width="18" height="18" fill="#00c6e6"/><path d="M0.3 17.7 L17.7 0.3" stroke="#22cdea" stroke-width="0.6"/></svg></div>
<div class="c" style="left:485.00px;top:437.60px;border:2px solid #757688"><svg style="position:absolute;left:3.5px;top:3.5px" width="18" height="18"><rect width="18" height="18" fill="#00c6e6"/><path d="M0.3 17.7 L17.7 0.3" stroke="#22cdea" stroke-width="0.6"/></svg></div>
<div class="c" style="left:521.60px;top:437.60px;border:2px solid #687ffb"></div>
<div class="c" style="left:558.20px;top:437.60px;border:2px solid #687ffb"></div>
<div class="c" style="left:594.80px;top:437.60px;border:2px solid #757688"><svg style="position:absolute;left:3.5px;top:3.5px" width="18" height="18"><rect width="18" height="18" fill="#00c6e6"/><path d="M0.3 17.7 L17.7 0.3" stroke="#22cdea" stroke-width="0.6"/></svg></div>
<div class="c" style="left:631.40px;top:437.60px;border:2px solid #757688"><svg style="position:absolute;left:3.5px;top:3.5px" width="18" height="18"><rect width="18" height="18" fill="#00c6e6"/><path d="M0.3 17.7 L17.7 0.3" stroke="#22cdea" stroke-width="0.6"/></svg></div>
<div class="c" style="left:668.00px;top:437.60px;border:2px solid #757688"><svg style="position:absolute;left:3.5px;top:3.5px" width="18" height="18"><rect width="18" height="18" fill="#00c6e6"/><path d="M0.3 17.7 L17.7 0.3" stroke="#22cdea" stroke-width="0.6"/></svg></div>
<div class="c" style="left:704.60px;top:437.60px;border:2px solid #757688"><svg style="position:absolute;left:3.5px;top:3.5px" width="18" height="18"><rect width="18" height="18" fill="#00c6e6"/><path d="M0.3 17.7 L17.7 0.3" stroke="#22cdea" stroke-width="0.6"/></svg></div>
<div class="c" style="left:741.20px;top:437.60px;border:2px solid #757688"></div>
<div class="c" style="left:777.80px;top:437.60px;border:2px solid #687ffb"></div>
<div class="c" style="left:814.40px;top:437.60px;border:2px solid #687ffb"></div>
<div class="c" style="left:851.00px;top:437.60px;border:2px solid #757688"></div>
<div class="c" style="left:887.60px;top:437.60px;border:2px solid #757688"></div>
<div class="c" style="left:924.20px;top:437.60px;border:2px solid #757688"></div>
<div class="c" style="left:960.80px;top:437.60px;border:2px solid #757688"></div>
<div class="c" style="left:997.40px;top:437.60px;border:2px solid #757688"></div>
<div class="c" style="left:1034.00px;top:437.60px;border:2px solid #687ffb"></div>
<div class="c" style="left:1070.60px;top:437.60px;border:2px solid #687ffb"></div>
<div class="c" style="left:1107.20px;top:437.60px;border:2px solid #757688"></div>
<div class="c" style="left:1143.80px;top:437.60px;border:2px solid #757688"></div>
<div class="c" style="left:1180.40px;top:437.60px;border:2px solid #757688"></div>
<div class="c" style="left:1217.00px;top:437.60px;border:2px solid #757688"></div>
<div class="c" style="left:1253.60px;top:437.60px;border:2px solid #757688"></div>
<div class="c" style="left:1290.20px;top:437.60px;border:2px solid #687ffb"></div>
<div class="c" style="left:1326.80px;top:437.60px;border:2px solid #687ffb"></div>
<div class="c" style="left:1363.40px;top:437.60px;border:2px solid #757688"></div>
<div class="c" style="left:1400.00px;top:437.60px;border:2px solid #757688"></div>
<div class="c" style="left:1436.60px;top:437.60px;border:2px solid #757688"></div>
<div class="c" style="left:1473.20px;top:437.60px;border:2px solid #757688"></div>
<div class="av" style="left:120.8px;top:481.60px;width:32px;height:32px;background:#f66262;color:#fff;font-size:14px;line-height:32px;text-align:center;-webkit-text-stroke:0.3px #fff;letter-spacing:0.3px">IA</div>
<div class="t" style="left:168.00px;top:481.50px;font-size:14.1px;color:#2b2b2b;font-weight:400;-webkit-text-stroke:0.3px #2b2b2b;">Indah Anwar</div>
<div class="t" style="left:168.00px;top:502.30px;font-size:11.6px;color:#85869e;font-weight:400;">Pelayan</div>
<div class="c" style="left:375.20px;top:483.10px;border:2px solid #f2f2f5"></div>
<div class="c" style="left:411.80px;top:483.10px;border:2px solid #f2f2f5"></div>
<div class="c" style="left:448.40px;top:483.10px;border:2px solid #757688"></div>
<div class="c" style="left:485.00px;top:483.10px;border:2px solid #757688"></div>
<div class="c" style="left:521.60px;top:483.10px;border:2px solid #687ffb"></div>
<div class="c" style="left:558.20px;top:483.10px;border:2px solid #687ffb"></div>
<div class="c" style="left:594.80px;top:483.10px;border:2px solid #757688"></div>
<div class="c" style="left:631.40px;top:483.10px;border:2px solid #757688"></div>
<div class="c" style="left:668.00px;top:483.10px;border:2px solid #757688"></div>
<div class="c" style="left:704.60px;top:483.10px;border:2px solid #757688"></div>
<div class="c" style="left:741.20px;top:483.10px;border:2px solid #757688"></div>
<div class="c" style="left:777.80px;top:483.10px;border:2px solid #687ffb"></div>
<div class="c" style="left:814.40px;top:483.10px;border:2px solid #687ffb"></div>
<div class="c" style="left:851.00px;top:483.10px;border:2px solid #757688"></div>
<div class="c" style="left:887.60px;top:483.10px;border:2px solid #757688"></div>
<div class="c" style="left:924.20px;top:483.10px;border:2px solid #757688"></div>
<div class="c" style="left:960.80px;top:483.10px;border:2px solid #757688"></div>
<div class="c" style="left:997.40px;top:483.10px;border:2px solid #757688"></div>
<div class="c" style="left:1034.00px;top:483.10px;border:2px solid #687ffb"></div>
<div class="c" style="left:1070.60px;top:483.10px;border:2px solid #687ffb"></div>
<div class="c" style="left:1107.20px;top:483.10px;border:2px solid #757688"></div>
<div class="c" style="left:1143.80px;top:483.10px;border:2px solid #757688"></div>
<div class="c" style="left:1180.40px;top:483.10px;border:2px solid #757688"></div>
<div class="c" style="left:1217.00px;top:483.10px;border:2px solid #757688"></div>
<div class="c" style="left:1253.60px;top:483.10px;border:2px solid #757688"></div>
<div class="c" style="left:1290.20px;top:483.10px;border:2px solid #687ffb"></div>
<div class="c" style="left:1326.80px;top:483.10px;border:2px solid #687ffb"></div>
<div class="c" style="left:1363.40px;top:483.10px;border:2px solid #757688"></div>
<div class="c" style="left:1400.00px;top:483.10px;border:2px solid #757688"></div>
<div class="c" style="left:1436.60px;top:483.10px;border:2px solid #757688"></div>
<div class="c" style="left:1473.20px;top:483.10px;border:2px solid #757688"></div>
<div class="av" style="left:120.8px;top:527.10px;width:32px;height:32px"><svg width="32" height="32" viewBox="0 0 32 32"><rect width="32" height="32" fill="#658345"/><path d="M0 9 L15 1 L17 3 L1 12 Z" fill="#7f9c58"/><path d="M0 15 L13 8 L14 10 L1 18 Z" fill="#7c9a56"/><path d="M0 21 L11 14 L12 16 L1 24 Z" fill="#74924f"/><ellipse cx="28.5" cy="21" rx="5.5" ry="5" fill="#a9a64c"/><ellipse cx="17.2" cy="13.2" rx="8" ry="9.6" fill="#1e1e20"/><path d="M9 32 L10.5 22.5 L28 22.5 L29.5 32 Z" fill="#1e1e20"/><path d="M10.5 17 L25 17 L28 23 L10 23 Z" fill="#1e1e20"/><path d="M5 26.5 L10.5 23.5 L11.5 32 L5 32 Z" fill="#e4e0e8"/><path d="M27.5 23.8 L31 25.5 L30 32 L26.5 32 Z" fill="#e4e0e8"/><ellipse cx="15" cy="14.6" rx="4.7" ry="5.9" fill="#d39d7e"/></svg></div>
<div class="t" style="left:168.00px;top:527.00px;font-size:14.1px;color:#2b2b2b;font-weight:400;-webkit-text-stroke:0.3px #2b2b2b;">Irene Sutanto</div>
<div class="t" style="left:168.00px;top:547.80px;font-size:11.6px;color:#85869e;font-weight:400;">Manajer</div>
<div class="c" style="left:375.20px;top:528.60px;border:2px solid #f2f2f5"><svg style="position:absolute;left:3.5px;top:3.5px" width="18" height="18"><rect width="18" height="18" fill="#00c6e6"/><path d="M0.3 17.7 L17.7 0.3" stroke="#22cdea" stroke-width="0.6"/></svg></div>
<div class="c" style="left:411.80px;top:528.60px;border:2px solid #f2f2f5"><svg style="position:absolute;left:3.5px;top:3.5px" width="18" height="18"><rect width="18" height="18" fill="#00c6e6"/><path d="M0.3 17.7 L17.7 0.3" stroke="#22cdea" stroke-width="0.6"/></svg></div>
<div class="c" style="left:448.40px;top:528.60px;border:2px solid #00c6e6"><svg style="position:absolute;left:3.5px;top:3.5px" width="18" height="18"><rect width="18" height="18" fill="#fb9b9b"/><path d="M0 0 H18 L0 18 Z" fill="#00c6e6"/></svg></div>
<div class="c" style="left:485.00px;top:528.60px;border:2px solid #00c6e6"><svg style="position:absolute;left:3.5px;top:3.5px" width="18" height="18"><rect width="18" height="18" fill="#fb9b9b"/><path d="M0 0 H18 L0 18 Z" fill="#00c6e6"/></svg></div>
<div class="c" style="left:521.60px;top:528.60px;border:2px solid #687ffb"></div>
<div class="c" style="left:558.20px;top:528.60px;border:2px solid #687ffb"></div>
<div class="c" style="left:594.80px;top:528.60px;border:2px solid #00c6e6"><svg style="position:absolute;left:3.5px;top:3.5px" width="18" height="18"><rect width="18" height="18" fill="#fb9b9b"/><path d="M0 0 H18 L0 18 Z" fill="#00c6e6"/></svg></div>
<div class="c" style="left:631.40px;top:528.60px;border:2px solid #00c6e6"><svg style="position:absolute;left:3.5px;top:3.5px" width="18" height="18"><rect width="18" height="18" fill="#fb9b9b"/><path d="M0 0 H18 L0 18 Z" fill="#00c6e6"/></svg></div>
<div class="c" style="left:668.00px;top:528.60px;border:2px solid #00c6e6"><svg style="position:absolute;left:3.5px;top:3.5px" width="18" height="18"><rect width="18" height="18" fill="#fb9b9b"/><path d="M0 0 H18 L0 18 Z" fill="#00c6e6"/></svg></div>
<div class="c" style="left:704.60px;top:528.60px;border:2px solid #00c6e6"><svg style="position:absolute;left:3.5px;top:3.5px" width="18" height="18"><rect width="18" height="18" fill="#fb9b9b"/><path d="M0 0 H18 L0 18 Z" fill="#00c6e6"/></svg></div>
<div class="c" style="left:741.20px;top:528.60px;border:2px solid #00c6e6"></div>
<div class="c" style="left:777.80px;top:528.60px;border:2px solid #687ffb"></div>
<div class="c" style="left:814.40px;top:528.60px;border:2px solid #687ffb"></div>
<div class="c" style="left:851.00px;top:528.60px;border:2px solid #00c6e6"></div>
<div class="c" style="left:887.60px;top:528.60px;border:2px solid #00c6e6"></div>
<div class="c" style="left:924.20px;top:528.60px;border:2px solid #00c6e6"></div>
<div class="c" style="left:960.80px;top:528.60px;border:2px solid #00c6e6"></div>
<div class="c" style="left:997.40px;top:528.60px;border:2px solid #00c6e6"></div>
<div class="c" style="left:1034.00px;top:528.60px;border:2px solid #687ffb"></div>
<div class="c" style="left:1070.60px;top:528.60px;border:2px solid #687ffb"></div>
<div class="c" style="left:1107.20px;top:528.60px;border:2px solid #00c6e6"></div>
<div class="c" style="left:1143.80px;top:528.60px;border:2px solid #00c6e6"></div>
<div class="c" style="left:1180.40px;top:528.60px;border:2px solid #00c6e6"></div>
<div class="c" style="left:1217.00px;top:528.60px;border:2px solid #00c6e6"></div>
<div class="c" style="left:1253.60px;top:528.60px;border:2px solid #00c6e6"></div>
<div class="c" style="left:1290.20px;top:528.60px;border:2px solid #687ffb"></div>
<div class="c" style="left:1326.80px;top:528.60px;border:2px solid #687ffb"></div>
<div class="c" style="left:1363.40px;top:528.60px;border:2px solid #00c6e6"></div>
<div class="c" style="left:1400.00px;top:528.60px;border:2px solid #00c6e6"></div>
<div class="c" style="left:1436.60px;top:528.60px;border:2px solid #00c6e6"></div>
<div class="c" style="left:1473.20px;top:528.60px;border:2px solid #00c6e6"></div>
<div class="av" style="left:120.8px;top:572.60px;width:32px;height:32px"><svg width="32" height="32" viewBox="0 0 32 32"><rect width="32" height="32" fill="#28180f"/><rect x="0" y="12" width="14" height="2" fill="#5a3423" opacity="0.8"/><rect x="0" y="20" width="32" height="1.6" fill="#5b3322" opacity="0.8"/><rect x="18" y="24" width="14" height="1.8" fill="#62392a" opacity="0.8"/><rect x="22" y="9" width="10" height="1.5" fill="#4a2a1c" opacity="0.8"/><ellipse cx="19.8" cy="7.2" rx="4.8" ry="3" fill="#131010"/><ellipse cx="19.6" cy="12.8" rx="4.2" ry="5.8" fill="#bf9479"/><rect x="16.5" y="16.5" width="5" height="4" fill="#a57a60"/><path d="M3.5 23 Q6 17.5 11.5 17.5 L15.5 18.5 Q19 24 19 32 L4 32 Z" fill="#ddd2c2"/></svg></div>
<div class="t" style="left:168.00px;top:572.50px;font-size:14.1px;color:#2b2b2b;font-weight:400;-webkit-text-stroke:0.3px #2b2b2b;">Ismail Azmi</div>
<div class="t" style="left:168.00px;top:593.30px;font-size:11.6px;color:#85869e;font-weight:400;">Kasir</div>
<div class="c" style="left:375.20px;top:574.10px;border:2px solid #f2f2f5"><svg style="position:absolute;left:3.5px;top:3.5px" width="18" height="18"><rect width="18" height="18" fill="#00c6e6"/><path d="M0.3 17.7 L17.7 0.3" stroke="#22cdea" stroke-width="0.6"/></svg></div>
<div class="c" style="left:411.80px;top:574.10px;border:2px solid #f2f2f5"><svg style="position:absolute;left:3.5px;top:3.5px" width="18" height="18"><rect width="18" height="18" fill="#00c6e6"/><path d="M0.3 17.7 L17.7 0.3" stroke="#22cdea" stroke-width="0.6"/></svg></div>
<div class="c" style="left:448.40px;top:574.10px;border:2px solid #757688"><svg style="position:absolute;left:3.5px;top:3.5px" width="18" height="18"><rect width="18" height="18" fill="#00c6e6"/><path d="M0.3 17.7 L17.7 0.3" stroke="#22cdea" stroke-width="0.6"/></svg></div>
<div class="c" style="left:485.00px;top:574.10px;border:2px solid #757688"><svg style="position:absolute;left:3.5px;top:3.5px" width="18" height="18"><rect width="18" height="18" fill="#00c6e6"/><path d="M0.3 17.7 L17.7 0.3" stroke="#22cdea" stroke-width="0.6"/></svg></div>
<div class="c" style="left:521.60px;top:574.10px;border:2px solid #687ffb"></div>
<div class="c" style="left:558.20px;top:574.10px;border:2px solid #687ffb"></div>
<div class="c" style="left:594.80px;top:574.10px;border:2px solid #757688"><svg style="position:absolute;left:3.5px;top:3.5px" width="18" height="18"><rect width="18" height="18" fill="#00c6e6"/><path d="M0.3 17.7 L17.7 0.3" stroke="#22cdea" stroke-width="0.6"/></svg></div>
<div class="c" style="left:631.40px;top:574.10px;border:2px solid #757688"><svg style="position:absolute;left:3.5px;top:3.5px" width="18" height="18"><rect width="18" height="18" fill="#00c6e6"/><path d="M0.3 17.7 L17.7 0.3" stroke="#22cdea" stroke-width="0.6"/></svg></div>
<div class="c" style="left:668.00px;top:574.10px;border:2px solid #757688"><svg style="position:absolute;left:3.5px;top:3.5px" width="18" height="18"><rect width="18" height="18" fill="#00c6e6"/><path d="M0.3 17.7 L17.7 0.3" stroke="#22cdea" stroke-width="0.6"/></svg></div>
<div class="c" style="left:704.60px;top:574.10px;border:2px solid #757688"><svg style="position:absolute;left:3.5px;top:3.5px" width="18" height="18"><rect width="18" height="18" fill="#00c6e6"/><path d="M0.3 17.7 L17.7 0.3" stroke="#22cdea" stroke-width="0.6"/></svg></div>
<div class="c" style="left:741.20px;top:574.10px;border:2px solid #757688"></div>
<div class="c" style="left:777.80px;top:574.10px;border:2px solid #687ffb"></div>
<div class="c" style="left:814.40px;top:574.10px;border:2px solid #687ffb"></div>
<div class="c" style="left:851.00px;top:574.10px;border:2px solid #757688"></div>
<div class="c" style="left:887.60px;top:574.10px;border:2px solid #757688"></div>
<div class="c" style="left:924.20px;top:574.10px;border:2px solid #757688"></div>
<div class="c" style="left:960.80px;top:574.10px;border:2px solid #757688"></div>
<div class="c" style="left:997.40px;top:574.10px;border:2px solid #757688"></div>
<div class="c" style="left:1034.00px;top:574.10px;border:2px solid #687ffb"></div>
<div class="c" style="left:1070.60px;top:574.10px;border:2px solid #687ffb"></div>
<div class="c" style="left:1107.20px;top:574.10px;border:2px solid #757688"></div>
<div class="c" style="left:1143.80px;top:574.10px;border:2px solid #757688"></div>
<div class="c" style="left:1180.40px;top:574.10px;border:2px solid #757688"></div>
<div class="c" style="left:1217.00px;top:574.10px;border:2px solid #757688"></div>
<div class="c" style="left:1253.60px;top:574.10px;border:2px solid #757688"></div>
<div class="c" style="left:1290.20px;top:574.10px;border:2px solid #687ffb"></div>
<div class="c" style="left:1326.80px;top:574.10px;border:2px solid #687ffb"></div>
<div class="c" style="left:1363.40px;top:574.10px;border:2px solid #757688"></div>
<div class="c" style="left:1400.00px;top:574.10px;border:2px solid #757688"></div>
<div class="c" style="left:1436.60px;top:574.10px;border:2px solid #757688"></div>
<div class="c" style="left:1473.20px;top:574.10px;border:2px solid #757688"></div>
<div class="av" style="left:120.8px;top:618.10px;width:32px;height:32px"><svg width="32" height="32" viewBox="0 0 32 32"><rect width="32" height="32" fill="#dedad0"/><rect x="1" y="17" width="7" height="15" fill="#ebe7e0"/><rect x="4.3" y="11.5" width="1.3" height="5.5" fill="#8a8580"/><ellipse cx="17.5" cy="11.8" rx="3.6" ry="4.6" fill="#2a2522"/><ellipse cx="17.5" cy="12.8" rx="2.4" ry="3" fill="#d8c4b2"/><ellipse cx="17.8" cy="20" rx="6.2" ry="5" fill="#252322"/><rect x="11.5" y="17" width="12.5" height="9" fill="#252322"/><ellipse cx="26" cy="24.5" rx="3.8" ry="3" fill="#3a3532"/><ellipse cx="26.5" cy="21.5" rx="2" ry="1" fill="#d0705a"/><rect x="16" y="27" width="14" height="2.5" fill="#4a403a"/><rect x="7.5" y="19.5" width="6.2" height="11" fill="#e6a594"/><rect x="8.5" y="21" width="4" height="7" fill="#f0e6e0"/><rect x="13.7" y="20" width="5" height="9" fill="#ede9e2"/></svg></div>
<div class="t" style="left:168.00px;top:618.00px;font-size:14.1px;color:#2b2b2b;font-weight:400;-webkit-text-stroke:0.3px #2b2b2b;">Rani Dwi Cahyono</div>
<div class="t" style="left:168.00px;top:638.80px;font-size:11.6px;color:#85869e;font-weight:400;">Kasir</div>
<div class="c" style="left:375.20px;top:619.60px;border:2px solid #f2f2f5"><svg style="position:absolute;left:3.5px;top:3.5px" width="18" height="18"><rect width="18" height="18" fill="#00c6e6"/><path d="M0.3 17.7 L17.7 0.3" stroke="#22cdea" stroke-width="0.6"/></svg></div>
<div class="c" style="left:411.80px;top:619.60px;border:2px solid #f2f2f5"><svg style="position:absolute;left:3.5px;top:3.5px" width="18" height="18"><rect width="18" height="18" fill="#00c6e6"/><path d="M0.3 17.7 L17.7 0.3" stroke="#22cdea" stroke-width="0.6"/></svg></div>
<div class="c" style="left:448.40px;top:619.60px;border:2px solid #757688"><svg style="position:absolute;left:3.5px;top:3.5px" width="18" height="18"><rect width="18" height="18" fill="#00c6e6"/><path d="M0.3 17.7 L17.7 0.3" stroke="#22cdea" stroke-width="0.6"/></svg></div>
<div class="c" style="left:485.00px;top:619.60px;border:2px solid #757688"><svg style="position:absolute;left:3.5px;top:3.5px" width="18" height="18"><rect width="18" height="18" fill="#00c6e6"/><path d="M0.3 17.7 L17.7 0.3" stroke="#22cdea" stroke-width="0.6"/></svg></div>
<div class="c" style="left:521.60px;top:619.60px;border:2px solid #687ffb"></div>
<div class="c" style="left:558.20px;top:619.60px;border:2px solid #687ffb"></div>
<div class="c" style="left:594.80px;top:619.60px;border:2px solid #757688"><svg style="position:absolute;left:3.5px;top:3.5px" width="18" height="18"><rect width="18" height="18" fill="#00c6e6"/><path d="M0.3 17.7 L17.7 0.3" stroke="#22cdea" stroke-width="0.6"/></svg></div>
<div class="c" style="left:631.40px;top:619.60px;border:2px solid #757688"><svg style="position:absolute;left:3.5px;top:3.5px" width="18" height="18"><rect width="18" height="18" fill="#00c6e6"/><path d="M0.3 17.7 L17.7 0.3" stroke="#22cdea" stroke-width="0.6"/></svg></div>
<div class="c" style="left:668.00px;top:619.60px;border:2px solid #757688"><svg style="position:absolute;left:3.5px;top:3.5px" width="18" height="18"><rect width="18" height="18" fill="#00c6e6"/><path d="M0.3 17.7 L17.7 0.3" stroke="#22cdea" stroke-width="0.6"/></svg></div>
<div class="c" style="left:704.60px;top:619.60px;border:2px solid #757688"><svg style="position:absolute;left:3.5px;top:3.5px" width="18" height="18"><rect width="18" height="18" fill="#00c6e6"/><path d="M0.3 17.7 L17.7 0.3" stroke="#22cdea" stroke-width="0.6"/></svg></div>
<div class="c" style="left:741.20px;top:619.60px;border:2px solid #757688"></div>
<div class="c" style="left:777.80px;top:619.60px;border:2px solid #687ffb"></div>
<div class="c" style="left:814.40px;top:619.60px;border:2px solid #687ffb"></div>
<div class="c" style="left:851.00px;top:619.60px;border:2px solid #757688"></div>
<div class="c" style="left:887.60px;top:619.60px;border:2px solid #757688"></div>
<div class="c" style="left:924.20px;top:619.60px;border:2px solid #757688"></div>
<div class="c" style="left:960.80px;top:619.60px;border:2px solid #757688"></div>
<div class="c" style="left:997.40px;top:619.60px;border:2px solid #757688"></div>
<div class="c" style="left:1034.00px;top:619.60px;border:2px solid #687ffb"></div>
<div class="c" style="left:1070.60px;top:619.60px;border:2px solid #687ffb"></div>
<div class="c" style="left:1107.20px;top:619.60px;border:2px solid #757688"></div>
<div class="c" style="left:1143.80px;top:619.60px;border:2px solid #757688"></div>
<div class="c" style="left:1180.40px;top:619.60px;border:2px solid #757688"></div>
<div class="c" style="left:1217.00px;top:619.60px;border:2px solid #757688"></div>
<div class="c" style="left:1253.60px;top:619.60px;border:2px solid #757688"></div>
<div class="c" style="left:1290.20px;top:619.60px;border:2px solid #687ffb"></div>
<div class="c" style="left:1326.80px;top:619.60px;border:2px solid #687ffb"></div>
<div class="c" style="left:1363.40px;top:619.60px;border:2px solid #757688"></div>
<div class="c" style="left:1400.00px;top:619.60px;border:2px solid #757688"></div>
<div class="c" style="left:1436.60px;top:619.60px;border:2px solid #757688"></div>
<div class="c" style="left:1473.20px;top:619.60px;border:2px solid #757688"></div>
<div style="position:absolute;left:1505.3px;top:239.1px;width:40px;height:287.5px;background:#6580fd;border-radius:12px 0 0 12px"></div>
<div class="t" style="left:1511.30px;width:20px;text-align:center;top:293.60px;font-size:15.3px;color:#fff;font-weight:700;">I</div>
<div class="t" style="left:1511.30px;width:20px;text-align:center;top:313.40px;font-size:15.3px;color:#fff;font-weight:700;">N</div>
<div class="t" style="left:1511.30px;width:20px;text-align:center;top:333.20px;font-size:15.3px;color:#fff;font-weight:700;">F</div>
<div class="t" style="left:1511.30px;width:20px;text-align:center;top:353.00px;font-size:15.3px;color:#fff;font-weight:700;">O</div>
<div class="t" style="left:1511.30px;width:20px;text-align:center;top:372.80px;font-size:15.3px;color:#fff;font-weight:700;">R</div>
<div class="t" style="left:1511.30px;width:20px;text-align:center;top:392.60px;font-size:15.3px;color:#fff;font-weight:700;">M</div>
<div class="t" style="left:1511.30px;width:20px;text-align:center;top:412.40px;font-size:15.3px;color:#fff;font-weight:700;">A</div>
<div class="t" style="left:1511.30px;width:20px;text-align:center;top:432.20px;font-size:15.3px;color:#fff;font-weight:700;">S</div>
<div class="t" style="left:1511.30px;width:20px;text-align:center;top:452.00px;font-size:15.3px;color:#fff;font-weight:700;">I</div>
<div class="t" style="left:1248.20px;top:695.40px;font-size:13.6px;color:#c9c9d1;font-weight:700;">Tunjukkan 1 - 7 dari 7</div>
<div style="position:absolute;left:1421.1px;top:688.7px;width:24.7px;height:24.7px;border-radius:50%;background:#e3e3e8"></div>
<svg style="position:absolute;left:1428px;top:694px" width="12" height="14" viewBox="0 0 12 14"><path d="M7.5 2.5 L3.5 7 L7.5 11.5" fill="none" stroke="#f6f6f8" stroke-width="1.3" stroke-linecap="round"/></svg>
<div class="circ" style="left:1455.8px;top:688.7px;width:24.7px;height:24.7px"></div>
<div class="t" style="left:1458.10px;width:20px;text-align:center;top:694.20px;font-size:14.5px;color:#fff;font-weight:700;">1</div>
<div style="position:absolute;left:1490.5px;top:688.7px;width:24.7px;height:24.7px;border-radius:50%;background:#e3e3e8"></div>
<svg style="position:absolute;left:1497px;top:694px" width="12" height="14" viewBox="0 0 12 14"><path d="M4.5 2.5 L8.5 7 L4.5 11.5" fill="none" stroke="#f6f6f8" stroke-width="1.3" stroke-linecap="round"/></svg>
<div class="t" style="left:104.50px;top:743.30px;font-size:14.1px;color:#80818f;font-weight:400;">© 2018-2022, Clockster PTE LTD</div>
<div class="t" style="left:377.80px;top:744.30px;font-size:13.9px;color:#80818f;font-weight:400;">Kebijakan privasi</div>
<div class="t" style="left:545.50px;top:744.30px;font-size:13.9px;color:#80818f;font-weight:400;">Syarat dan ketentuan</div>
<svg style="position:absolute;left:1263px;top:741.5px" width="16" height="16" viewBox="0 0 16 16"><rect x="1.2" y="1.2" width="13.6" height="13.6" rx="3.2" fill="none" stroke="#6e7082" stroke-width="1.5" stroke-linecap="round" stroke-linejoin="round"/><circle cx="8" cy="8" r="3.2" fill="none" stroke="#6e7082" stroke-width="1.5" stroke-linecap="round" stroke-linejoin="round"/><circle cx="11.9" cy="4.1" r="0.5" fill="#6e7082"/></svg>
<svg style="position:absolute;left:1296.5px;top:741.5px" width="16" height="16" viewBox="0 0 16 16"><rect x="1.2" y="1.2" width="13.6" height="13.6" rx="2" fill="none" stroke="#6e7082" stroke-width="1.5" stroke-linecap="round" stroke-linejoin="round"/><path d="M10.8 4.6 H9.6 C8.6 4.6 8 5.2 8 6.2 V14.8 M6 8.3 H10.6" fill="none" stroke="#6e7082" stroke-width="1.5" stroke-linecap="round" stroke-linejoin="round"/></svg>
<svg style="position:absolute;left:1329px;top:742.5px" width="18" height="14" viewBox="0 0 18 14"><rect x="1" y="1.4" width="16" height="11.2" rx="2.6" fill="none" stroke="#6e7082" stroke-width="1.5" stroke-linecap="round" stroke-linejoin="round"/><path d="M7.4 4.6 L11.2 7 L7.4 9.4 Z" fill="#6e7082"/></svg>
<svg style="position:absolute;left:1363px;top:741.5px" width="16" height="16" viewBox="0 0 16 16"><rect x="1.2" y="1.2" width="13.6" height="13.6" rx="2" fill="none" stroke="#6e7082" stroke-width="1.5" stroke-linecap="round" stroke-linejoin="round"/><path d="M4.8 7 V11.5 M8 11.5 V7.2 M8 8.8 C8.6 7.4 11.2 6.8 11.2 9 V11.5" fill="none" stroke="#6e7082" stroke-width="1.5" stroke-linecap="round" stroke-linejoin="round"/><circle cx="4.8" cy="4.6" r="0.7" fill="#6e7082"/></svg>
<svg style="position:absolute;left:1396px;top:742px" width="17" height="15" viewBox="0 0 17 15"><path d="M1.5 7.2 L15.5 1.5 L12.8 13.5 L8 10.2 L6.2 13.3 L6.2 9.4 L13.2 3.5 M6.2 9.4 L1.5 7.2" fill="none" stroke="#6e7082" stroke-width="1.5" stroke-linecap="round" stroke-linejoin="round"/></svg>
<svg style="position:absolute;left:1467.5px;top:741.5px" width="15" height="17" viewBox="0 0 15 17"><path d="M10.5 0.8 C10.7 2.2 9.6 3.9 8 4 C7.8 2.6 9 1 10.5 0.8 Z M7.6 4.6 C8.6 4.6 9.6 4 10.5 4 C11.9 4 13 4.8 13.6 5.7 C12 6.6 12 9.4 14 10.4 C13.4 12.3 12 15.6 10.6 15.8 C9.5 15.9 9.2 15.2 7.8 15.2 C6.4 15.2 6 15.9 5 15.9 C3.4 15.9 0.8 12.3 0.8 8.9 C0.8 5.8 2.8 4.1 4.8 4.1 C5.9 4.1 6.8 4.6 7.6 4.6 Z" fill="#bdbdc2"/></svg>
<svg style="position:absolute;left:1498px;top:742px" width="15" height="16" viewBox="0 0 15 16"><path d="M1.2 1 L8.6 8 L1.2 15 C0.9 14.8 0.8 14.5 0.8 14.1 V1.9 C0.8 1.5 0.9 1.2 1.2 1 Z" fill="#2bb7f0"/><path d="M1.2 1 L8.6 8 L10.9 5.7 L2.5 0.9 C2 0.6 1.5 0.7 1.2 1 Z" fill="#34c26b"/><path d="M1.2 15 L8.6 8 L10.9 10.3 L2.5 15.1 C2 15.4 1.5 15.3 1.2 15 Z" fill="#ea4a4a"/><path d="M10.9 5.7 L13.8 7.3 C14.4 7.7 14.4 8.3 13.8 8.7 L10.9 10.3 L8.6 8 Z" fill="#fbc02d"/></svg>
</body></html>
